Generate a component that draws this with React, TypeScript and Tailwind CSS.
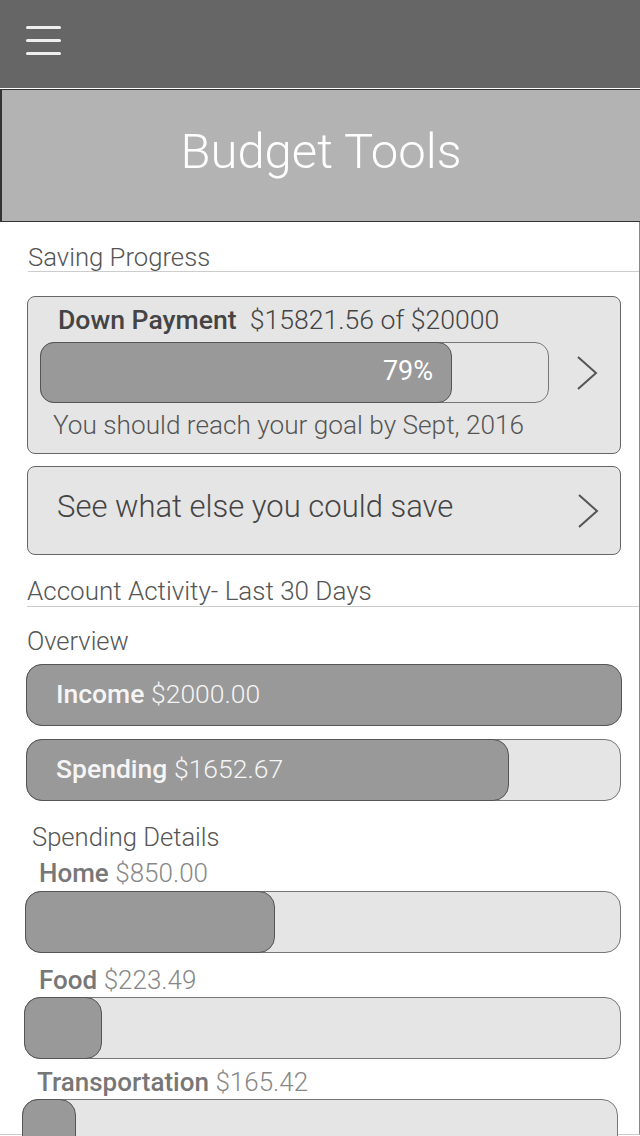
import React from "react";

const font = { fontFamily: "Roboto, 'Liberation Sans', sans-serif" };

function Chevron() {
  return (
    <svg width="22" height="36" viewBox="0 0 22 36" className="shrink-0">
      <polyline points="2,2 20,18 2,34" fill="none" stroke="#555" strokeWidth="2" strokeLinejoin="miter" />
    </svg>
  );
}

function Bar({ fill, ml, w, children }: { fill: number; ml: string; w: string; children?: React.ReactNode }) {
  return (
    <div className={`relative h-[62px] shrink-0 rounded-[16px] border border-[#777] bg-[#e5e5e5] ${ml} ${w}`}>
      <div
        className="absolute -left-px -top-px -bottom-px flex items-center rounded-[16px] border border-[#555] bg-[#999] pl-[29px]"
        style={{ width: fill }}
      >
        {children}
      </div>
    </div>
  );
}

export default function App() {
  return (
    <div className="relative h-[1136px] w-[640px] overflow-hidden bg-white" style={font}>
      {/* top nav */}
      <div className="flex h-[88px] items-start bg-[#666] pl-[26px] pt-[26px]">
        <div className="flex flex-col gap-[10px]">
          <div className="h-[3px] w-[35px] rounded-full bg-[#eee]" />
          <div className="h-[3px] w-[35px] rounded-full bg-[#eee]" />
          <div className="h-[3px] w-[35px] rounded-full bg-[#eee]" />
        </div>
      </div>
      <div className="h-px bg-white" />
      {/* title band */}
      <div className="flex h-[133px] items-center justify-center border-t border-b border-l-2 border-[#333] bg-[#b3b3b3] pb-[9px]">
        <span className="text-[49px] font-light leading-none text-white">Budget Tools</span>
      </div>

      {/* content */}
      <div className="flex h-[913px] flex-col border-r border-b border-r-[#888] border-b-[#ccc] text-[#555]">
        <div className="ml-[28px] mt-[20px] h-[30px] shrink-0 border-b border-[#ccc] text-[25.7px] font-light leading-[30px]">
          Saving Progress
        </div>

        {/* card 1 */}
        <div className="ml-[27px] mt-[24px] flex h-[158px] w-[594px] shrink-0 flex-col rounded-[8px] border border-[#666] bg-[#e5e5e5]">
          <div className="ml-[30px] mt-[8px] text-[26.6px] leading-[30px] text-[#444]">
            <span className="font-medium">Down Payment</span>
            <span className="font-light">&nbsp;&nbsp;$15821.56 of $20000</span>
          </div>
          <div className="ml-[12px] mt-[7px] flex items-center gap-[27px]">
            <div className="relative h-[61px] w-[509px] rounded-[14px] border border-[#777] bg-[#e5e5e5]">
              <div
                className="absolute -left-px -top-px -bottom-px flex items-center justify-end rounded-[14px] border border-[#555] bg-[#999] pr-[18px]"
                style={{ width: 412 }}
              >
                <span className="pb-[2px] text-[27px] font-normal text-white">79%</span>
              </div>
            </div>
            <Chevron />
          </div>
          <div className="ml-[25px] mt-[7px] text-[26.2px] font-light leading-[30px] text-[#555]">
            You should reach your goal by Sept, 2016
          </div>
        </div>

        {/* card 2 */}
        <div className="ml-[27px] mt-[12px] flex h-[89px] w-[594px] shrink-0 items-center justify-between rounded-[8px] border border-[#666] bg-[#e5e5e5] pl-[29px] pr-[21px]">
          <span className="pb-[6px] text-[31px] font-light text-[#444]">See what else you could save</span>
          <Chevron />
        </div>

        <div className="ml-[27px] mt-[22px] h-[30px] shrink-0 border-b border-[#ccc] text-[26px] font-light leading-[29px]">
          Account Activity- Last 30 Days
        </div>

        <div className="ml-[27px] mt-[20px] shrink-0 text-[25.5px] font-light leading-[28px]">Overview</div>

        <div className="ml-[26px] mt-[9px] shrink-0">
          <Bar fill={596} ml="ml-0" w="w-[595px]">
            <span className="pb-[2px] text-[26.5px] text-[#f5f5f5]">
              <span className="font-medium">Income</span> <span className="font-light">$2000.00</span>
            </span>
          </Bar>
        </div>
        <div className="ml-[26px] mt-[13px] shrink-0">
          <Bar fill={483} ml="ml-0" w="w-[595px]">
            <span className="pb-[2px] text-[26.5px] text-[#f5f5f5]">
              <span className="font-medium">Spending</span> <span className="font-light">$1652.67</span>
            </span>
          </Bar>
        </div>

        <div className="ml-[32px] mt-[22px] shrink-0 text-[25.6px] font-light leading-[28px]">Spending Details</div>

        <div className="ml-[39px] mt-[8px] shrink-0 text-[26px] leading-[28px] text-[#777]">
          <span className="font-medium">Home</span> <span className="font-light text-[#888]">$850.00</span>
        </div>
        <div className="mt-[4px] shrink-0">
          <Bar fill={250} ml="ml-[25px]" w="w-[596px]" />
        </div>

        <div className="ml-[39px] mt-[13px] shrink-0 text-[26px] leading-[28px] text-[#777]">
          <span className="font-medium">Food</span> <span className="font-light text-[#888]">$223.49</span>
        </div>
        <div className="mt-[3px] shrink-0">
          <Bar fill={78} ml="ml-[24px]" w="w-[597px]" />
        </div>

        <div className="ml-[37px] mt-[9px] shrink-0 text-[26px] leading-[28px] text-[#777]">
          <span className="font-medium">Transportation</span> <span className="font-light text-[#888]">$165.42</span>
        </div>
        <div className="mt-[3px] shrink-0">
          <Bar fill={54} ml="ml-[22px]" w="w-[596px]" />
        </div>
      </div>
    </div>
  );
}
